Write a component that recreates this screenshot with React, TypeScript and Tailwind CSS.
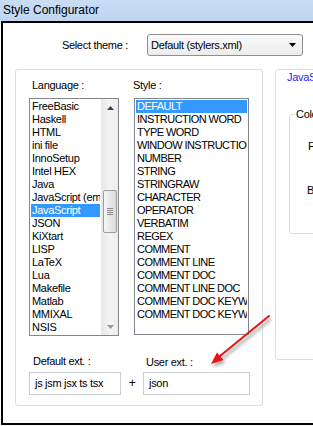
import React from 'react';

const languages = [
  'FreeBasic',
  'Haskell',
  'HTML',
  'ini file',
  'InnoSetup',
  'Intel HEX',
  'Java',
  'JavaScript (embedded)',
  'JavaScript',
  'JSON',
  'KiXtart',
  'LISP',
  'LaTeX',
  'Lua',
  'Makefile',
  'Matlab',
  'MMIXAL',
  'NSIS',
];

const styles = [
  'DEFAULT',
  'INSTRUCTION WORD',
  'TYPE WORD',
  'WINDOW INSTRUCTION',
  'NUMBER',
  'STRING',
  'STRINGRAW',
  'CHARACTER',
  'OPERATOR',
  'VERBATIM',
  'REGEX',
  'COMMENT',
  'COMMENT LINE',
  'COMMENT DOC',
  'COMMENT LINE DOC',
  'COMMENT DOC KEYWORD',
  'COMMENT DOC KEYWORD ERROR',
];

const ListItem: React.FC<{ label: string; selected?: boolean }> = ({ label, selected }) => (
  <div
    className={
      selected
        ? 'h-[13px] leading-[13px] pl-[1px] whitespace-nowrap overflow-hidden bg-[#3399ff] text-white'
        : 'h-[13px] leading-[13px] pl-[1px] whitespace-nowrap overflow-hidden text-black'
    }
  >
    {label}
  </div>
);

// Win7 style vertical scrollbar for the language list
const ScrollBar: React.FC = () => (
  <div className="w-[17px] shrink-0 flex flex-col bg-gradient-to-r from-[#e8e8e8] via-[#f4f4f4] to-[#ececec] border-l border-[#eaeaea]">
    <div className="h-[17px] flex items-center justify-center">
      <svg width="7" height="4" viewBox="0 0 7 4">
        <path d="M0 4 L3.5 0 L7 4 Z" fill="#404040" />
      </svg>
    </div>
    <div className="flex-1 flex flex-col">
      <div className="mt-[74px] mx-[1px] h-[43px] rounded-[2px] border border-[#9c9c9c] bg-gradient-to-r from-[#f6f6f6] to-[#dadada] flex flex-col items-center justify-center gap-[1px]">
        <div className="w-[6px] h-[1px] bg-[#8a8a8a]" />
        <div className="w-[6px] h-[1px] bg-[#8a8a8a]" />
        <div className="w-[6px] h-[1px] bg-[#8a8a8a]" />
        <div className="w-[6px] h-[1px] bg-[#8a8a8a]" />
      </div>
    </div>
    <div className="h-[17px] flex items-center justify-center">
      <svg width="7" height="4" viewBox="0 0 7 4">
        <path d="M0 0 L3.5 4 L7 0 Z" fill="#9a9a9a" />
      </svg>
    </div>
  </div>
);

const App: React.FC = () => {
  return (
    <div className="w-[313px] h-[426px] bg-white overflow-hidden relative font-['Liberation_Sans',Arial,sans-serif] text-[11px] tracking-[-0.3px] text-black">
      {/* title bar */}
      <div className="h-[21px] bg-gradient-to-b from-[#c9ddf4] to-[#bfd5ef] pl-[3px] text-[12px] leading-[20px] tracking-normal text-black">
        Style Configurator
      </div>

      <div className="ml-[1px] h-[404px] border-l-2 border-t-2 border-b-2 border-black bg-white">
        {/* theme selector */}
        <div className="pt-[11px] flex items-center">
          <div className="w-[125px] text-right leading-[13px]">Select theme :</div>
          <div className="ml-[19px] w-[156px] h-[22px] shrink-0 rounded-[3px] border border-[#8e8f8f] bg-gradient-to-b from-[#fbfbfb] to-[#ececec] flex items-center pl-[3px] pr-[6px]">
            <span className="flex-1 leading-[13px]">Default (stylers.xml)</span>
            <svg width="7" height="4" viewBox="0 0 7 4">
              <path d="M0 0 L7 0 L3.5 4 Z" fill="#000" />
            </svg>
          </div>
        </div>

        <div className="mt-[13px] flex">
          {/* left group */}
          <div className="ml-[12px] w-[248px] h-[337px] shrink-0 rounded-[3px] border border-[#d5dfe5] pl-[13px] pt-[9px]">
            <div className="flex gap-[15px]">
              <div className="w-[90px] shrink-0">
                <div className="pl-[3px] h-[13px] leading-[13px]">Language :</div>
                <div className="mt-[6px] h-[238px] border border-[#828790] flex">
                  <div className="flex-1 p-[1px] overflow-hidden">
                    {languages.map((l) => (
                      <ListItem key={l} label={l} selected={l === 'JavaScript'} />
                    ))}
                  </div>
                  <ScrollBar />
                </div>
              </div>
              <div className="w-[115px] shrink-0">
                <div className="-ml-[1px] h-[13px] leading-[13px]">Style :</div>
                <div className="mt-[6px] h-[237px] border border-[#828790] p-[1px] overflow-hidden tracking-[-0.55px]">
                  {styles.map((s) => (
                    <ListItem key={s} label={s} selected={s === 'DEFAULT'} />
                  ))}
                </div>
              </div>
            </div>

            {/* extensions */}
            <div className="mt-[19px] flex">
              <div className="w-[92px] shrink-0">
                <div className="pl-[4px] h-[13px] leading-[13px]">Default ext. :</div>
                <div className="mt-[4px] h-[23px] border border-[#c9cdd4] flex items-center pl-[5px]">
                  js jsm jsx ts tsx
                </div>
              </div>
              <div className="w-[22px] shrink-0 flex items-end justify-center">
                <div className="h-[23px] leading-[23px] text-[12px]">+</div>
              </div>
              <div className="w-[107px] shrink-0">
                <div className="pl-[3px] mt-[1px] h-[13px] leading-[13px]">User ext. :</div>
                <div className="mt-[3px] h-[23px] border border-[#c9cdd4] flex items-center pl-[5px]">
                  json
                </div>
              </div>
            </div>
          </div>

          {/* right group */}
          <div className="ml-[12px] w-[200px] h-[291px] shrink-0 rounded-[3px] border border-[#d5dfe5] pl-[11px]">
            <div className="pt-[1px] h-[13px] leading-[13px] text-[#1f1fff] whitespace-nowrap">JavaScript : DEFAULT</div>
            <fieldset className="mt-[25px] ml-[2px] w-[180px] h-[126px] rounded-[3px] border border-[#d5dfe5] pl-[5px]">
              <legend className="px-[1px] leading-[13px]">Colour Style</legend>
              <div className="pl-[13px] pt-[19px] leading-[13px] whitespace-nowrap">Foreground colour</div>
              <div className="pl-[12px] pt-[31px] leading-[13px] whitespace-nowrap">Background colour</div>
            </fieldset>
          </div>
        </div>
      </div>

      {/* red annotation arrow */}
      <svg className="absolute inset-0 pointer-events-none" width="313" height="426" viewBox="0 0 313 426">
        <defs>
          <filter id="sh" x="-20%" y="-20%" width="140%" height="140%">
            <feGaussianBlur stdDeviation="1.4" />
          </filter>
        </defs>
        <g transform="translate(2,3)" filter="url(#sh)" opacity="0.55">
          <path d="M269 316 L220 356" stroke="#707070" strokeWidth="2.4" />
          <path d="M211 364 L223.4 360.1 L217 352.5 Z" fill="#707070" />
        </g>
        <path d="M269 316 L220 356" stroke="#ee1111" strokeWidth="2" strokeLinecap="round" />
        <path d="M211 364 L223.4 360.1 L217 352.5 Z" fill="#ee1111" />
      </svg>
    </div>
  );
};

export default App;
